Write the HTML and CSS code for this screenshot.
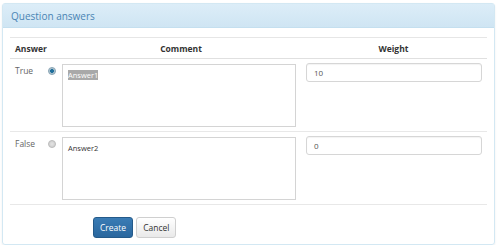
FILE: index.html
```html
<!DOCTYPE html>
<html>
<head>
<meta charset="utf-8">
<link rel="stylesheet" href="styles.css">
</head>
<body>
<div class="panel">
  <div class="panel-heading">Question answers</div>
  <div class="panel-body">
    <table class="answers">
      <thead>
        <tr>
          <th class="col-answer">Answer</th>
          <th class="col-comment">Comment</th>
          <th class="col-weight">Weight</th>
        </tr>
      </thead>
      <tbody>
        <tr>
          <td class="cell-answer"><span class="label">True</span><span class="radio checked"></span></td>
          <td><div class="textarea"><span class="selected">Answer1</span></div></td>
          <td><div class="input">10</div></td>
        </tr>
        <tr>
          <td class="cell-answer"><span class="label">False</span><span class="radio"></span></td>
          <td><div class="textarea">Answer2</div></td>
          <td><div class="input">0</div></td>
        </tr>
      </tbody>
    </table>
    <div class="actions">
      <button class="btn btn-primary">Create</button>
      <button class="btn btn-default">Cancel</button>
    </div>
  </div>
</div>
</body>
</html>
```
FILE: styles.css
```css
html, body {
  margin: 0;
  padding: 0;
  background: #fff;
}
body {
  font-family: "Open Sans", "DejaVu Sans", sans-serif;
  font-size: 8.5px;
  color: #333;
}
.panel {
  margin: 3px 6px 0 2px;
  width: 493px;
  height: 242px;
  border: 1px solid #d3e8f3;
  border-radius: 3px;
  box-shadow: 0 1px 2px rgba(0,0,0,0.08);
  box-sizing: border-box;
}
.panel-heading {
  height: 24px;
  box-sizing: border-box;
  padding: 5px 8px 0;
  background: linear-gradient(#dcedf8, #cfe5f3);
  color: #4a84b4;
  font-size: 10px;
  border-bottom: 1px solid #c4dfef;
}
.panel-body {
  padding: 9px 7px 0 7px;
}
.answers {
  width: 477px;
  border-collapse: collapse;
  table-layout: fixed;
}
.answers th {
  font-weight: bold;
  font-size: 8.5px;
  color: #333;
  height: 20px;
  border-top: 1px solid #e6e6e6;
  border-bottom: 1px solid #e0e0e0;
  padding: 0;
}
.col-answer { width: 52px; text-align: left; padding-left: 5px !important; box-sizing: border-box; }
.col-comment { width: 238px; text-align: center; }
.col-weight { text-align: center; }
.answers td {
  vertical-align: top;
  padding: 5px 0 4px;
  border-bottom: 1px solid #e8e8e8;
}
.cell-answer {
  padding-left: 5px !important;
}
.cell-answer .label {
  display: inline-block;
  width: 33px;
  color: #666;
  padding-top: 1px;
}
.radio {
  display: inline-block;
  width: 6px;
  height: 6px;
  border-radius: 50%;
  background: radial-gradient(#e4e4e4, #c9c9c9);
  border: 1px solid #bdbdbd;
  vertical-align: -1px;
}
.radio.checked {
  background: radial-gradient(circle, #1f6f9c 0 1.6px, #a8bfcc 2.2px, #c7d3da);
  border-color: #8aa6b6;
}
.textarea {
  width: 234px;
  height: 63px;
  box-sizing: border-box;
  border: 1px solid #d4d4d4;
  padding: 5px 5px;
  font-size: 7.5px;
  color: #333;
}
.selected {
  background: #a9a9a9;
  color: #fff;
}
.input {
  width: 176px;
  height: 19px;
  box-sizing: border-box;
  border: 1px solid #d6d6d6;
  border-radius: 3px;
  padding: 3px 7px;
  font-size: 8px;
  color: #555;
  margin-left: 6px;
  margin-top: -1px;
  box-shadow: inset 0 1px 1px rgba(0,0,0,0.05);
}
.actions {
  padding: 12px 0 0 83px;
  display: flex;
  gap: 3px;
}
.btn {
  font-family: "Open Sans", "DejaVu Sans", sans-serif;
  font-size: 8.5px;
  height: 21px;
  padding: 0 6px;
  border-radius: 3px;
  cursor: pointer;
}
.btn-primary {
  background: linear-gradient(#3a7cb5, #2a679e);
  border: 1px solid #245a8a;
  color: #fff;
}
.btn-default {
  background: linear-gradient(#ffffff, #e9e9e9);
  border: 1px solid #cfcfcf;
  color: #333;
}
```
